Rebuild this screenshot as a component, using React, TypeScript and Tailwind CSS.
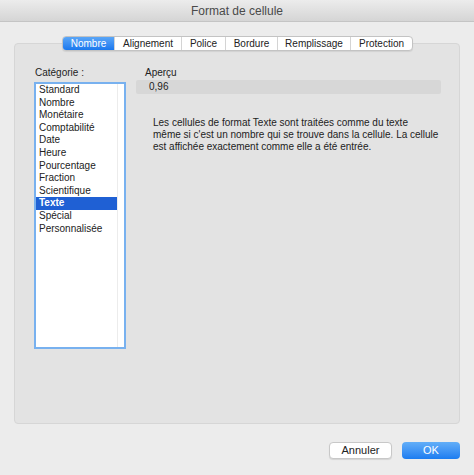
import React from "react";

const tabs = ["Nombre", "Alignement", "Police", "Bordure", "Remplissage", "Protection"];
const tabW = [51, 67, 44, 52, 73, 62];
const cats = [
  "Standard",
  "Nombre",
  "Monétaire",
  "Comptabilité",
  "Date",
  "Heure",
  "Pourcentage",
  "Fraction",
  "Scientifique",
  "Texte",
  "Spécial",
  "Personnalisée",
];

export default function App() {
  return (
    <div
      className="w-[474px] h-[475px] bg-[#ececec] flex flex-col text-[#222] overflow-hidden"
      style={{ fontFamily: '"Liberation Sans", Arial, sans-serif' }}
    >
      <div className="h-[22px] shrink-0 bg-gradient-to-b from-[#ececec] to-[#d5d5d5] border-b border-[#c4c4c4] flex items-center justify-center text-[12px] text-[#4a4a4a]">
        Format de cellule
      </div>

      <div className="flex flex-col pl-[14px] pt-[14px]">
        <div className="relative z-10 flex ml-[48px] h-[15px] -mb-[8px] self-start rounded-[4px] border border-[#c3c3c3] bg-white shadow-[0_1px_1px_rgba(0,0,0,0.08)] overflow-hidden text-[10px]">
          {tabs.map((t, i) => (
            <div
              key={t}
              className={
                i === 0
                  ? "flex items-center justify-center bg-gradient-to-b from-[#5aa6f7] to-[#1978ee] text-white"
                  : "flex items-center justify-center border-l border-[#d4d4d4] text-[#222]"
              }
              style={{ width: tabW[i] }}
            >
              {t}
            </div>
          ))}
        </div>

        <div className="w-[446px] h-[381px] rounded-[4px] border border-[#d6d6d6] bg-[#e3e3e3] flex pt-[22px] pl-[19px]">
          <div className="flex flex-col w-[92px]">
            <div className="text-[10px] h-[16px] leading-[14px] pl-[1px]">Catégorie :</div>
            <div className="h-[267px] border-2 border-[#78b1ef] bg-white flex">
              <div className="flex-1 flex flex-col text-[10px]">
                {cats.map((c) => (
                  <div
                    key={c}
                    className={
                      c === "Texte"
                        ? "h-[12.6px] leading-[12.6px] pl-[3px] bg-[#1f60d4] text-white font-bold"
                        : "h-[12.6px] leading-[12.6px] pl-[3px]"
                    }
                  >
                    {c}
                  </div>
                ))}
              </div>
              <div className="w-[7px] border-l border-[#ececec]" />
            </div>
          </div>

          <div className="flex flex-col ml-[10px] w-[305px]">
            <div className="text-[10px] h-[14px] leading-[14px] pl-[9px]">Aperçu</div>
            <div className="h-[14px] rounded-[2px] bg-[#d7d7d7] text-[10px] leading-[14px] pl-[13px]">0,96</div>
            <div className="mt-[23px] pl-[17px] pr-0 text-[10px] leading-[11.8px] whitespace-nowrap">
              Les cellules de format Texte sont traitées comme du texte
              <br />
              même si c'est un nombre qui se trouve dans la cellule. La cellule
              <br />
              est affichée exactement comme elle a été entrée.
            </div>
          </div>
        </div>
      </div>

      <div className="flex justify-end gap-[10px] pr-[14px] mt-[18px] text-[11px]">
        <div className="w-[63px] h-[17px] rounded-[4px] bg-white border border-[#c8c8c8] shadow-[0_1px_1px_rgba(0,0,0,0.1)] flex items-center justify-center text-[#222]">
          Annuler
        </div>
        <div className="w-[58px] h-[17px] rounded-[4px] bg-gradient-to-b from-[#62aef8] to-[#1a7cf0] flex items-center justify-center text-white">
          OK
        </div>
      </div>
    </div>
  );
}
